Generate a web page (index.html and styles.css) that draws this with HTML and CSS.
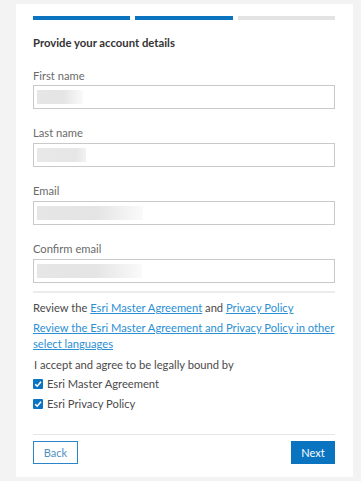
FILE: index.html
```html
<!DOCTYPE html>
<html>
<head>
<meta charset="utf-8">
<link rel="stylesheet" href="styles.css">
</head>
<body>
<div class="card">
  <div class="progress">
    <div class="step done"></div>
    <div class="step done"></div>
    <div class="step"></div>
  </div>
  <h1 class="title">Provide your account details</h1>
  <div class="field">
    <label class="label">First name</label>
    <div class="input"><span class="blur" style="width:46px"></span></div>
  </div>
  <div class="field">
    <label class="label">Last name</label>
    <div class="input"><span class="blur solid" style="width:49px"></span></div>
  </div>
  <div class="field">
    <label class="label">Email</label>
    <div class="input"><span class="blur" style="width:106px"></span></div>
  </div>
  <div class="field">
    <label class="label">Confirm email</label>
    <div class="input"><span class="blur" style="width:105px"></span></div>
  </div>
  <div class="divider thick"></div>
  <p class="text first">Review the <a href="#">Esri Master Agreement</a> and <a href="#">Privacy Policy</a></p>
  <p class="text links"><a href="#">Review the Esri Master Agreement and Privacy Policy in other select languages</a></p>
  <p class="text accept">I accept and agree to be legally bound by</p>
  <div class="check c1"><span class="box"><svg viewBox="0 0 10 10" width="10" height="10"><path d="M2.2 5.2 L4.2 7.2 L8 2.8" fill="none" stroke="#fff" stroke-width="1.6"/></svg></span>Esri Master Agreement</div>
  <div class="check c2"><span class="box"><svg viewBox="0 0 10 10" width="10" height="10"><path d="M2.2 5.2 L4.2 7.2 L8 2.8" fill="none" stroke="#fff" stroke-width="1.6"/></svg></span>Esri Privacy Policy</div>
  <div class="divider"></div>
  <div class="actions">
    <button class="btn back">Back</button>
    <button class="btn next">Next</button>
  </div>
</div>
</body>
</html>
```
FILE: styles.css
```css
html, body {
  margin: 0;
  padding: 0;
  background: #f3f3f3;
  font-family: Lato, "Noto Sans", sans-serif;
  color: #4a4a4a;
}
.card {
  box-sizing: border-box;
  margin: 4px 8px 0 16px;
  width: 337px;
  height: 473px;
  background: #fff;
  padding: 12px 18px 0 17px;
  display: flex;
  flex-direction: column;
}
.progress {
  display: flex;
  gap: 5px;
}
.step {
  flex: 1;
  height: 4px;
  background: #e3e3e3;
}
.step.done {
  background: #0a74c0;
}
.title {
  margin: 15px 0 0;
  font-size: 11.3px;
  line-height: 16px;
  font-weight: 700;
  color: #333;
}
.field {
  display: flex;
  flex-direction: column;
  margin-top: 18px;
}
.field + .field { margin-top: 17px; }
.label {
  font-size: 11.2px;
  line-height: 14px;
  color: #6a6a6a;
  margin-bottom: 2px;
}
.field + .field .label { margin-bottom: 3px; }
.input {
  box-sizing: border-box;
  height: 24px;
  border: 1px solid #c9c9c9;
  display: flex;
  align-items: center;
  padding-left: 3px;
}
.blur {
  height: 14px;
  background: linear-gradient(90deg, #e6e6e6 0%, #e4e4e4 55%, #fafafa 100%);
}
.blur.solid {
  background: linear-gradient(90deg, #e8e8e8 0%, #e6e6e6 80%, #f2f2f2 100%);
}
.divider {
  height: 1px;
  background: #e6e6e6;
  margin-top: 22px;
}
.divider.thick {
  height: 2px;
  margin-top: 8px;
  background: #ececec;
}
.text {
  margin: 0;
  font-size: 11.2px;
  line-height: 16px;
  color: #4a4a4a;
}
.text a {
  color: #2b8fd4;
  text-decoration: underline;
}
.text.first { margin-top: 7px; }
.text.links { margin-top: 4px; }
.text.accept { margin-top: 5px; padding-left: 1px; }
.check {
  display: flex;
  align-items: center;
  font-size: 11.2px;
  line-height: 16px;
  color: #4a4a4a;
}
.check.c1 { margin-top: 3px; }
.check.c2 { margin-top: 4px; }
.box {
  width: 10px;
  height: 10px;
  background: #0a74c0;
  border-radius: 1px;
  margin-right: 4px;
  display: flex;
}
.actions {
  display: flex;
  justify-content: space-between;
  margin-top: 6px;
}
.btn {
  box-sizing: border-box;
  height: 23px;
  font-family: Lato, "Noto Sans", sans-serif;
  font-size: 11px;
  padding: 0;
  cursor: pointer;
}
.back {
  width: 45px;
  background: #fff;
  border: 1px solid #2a86c8;
  color: #4f90c4;
}
.next {
  width: 44px;
  background: #0a74c0;
  border: 1px solid #0a74c0;
  color: #fff;
}
```
